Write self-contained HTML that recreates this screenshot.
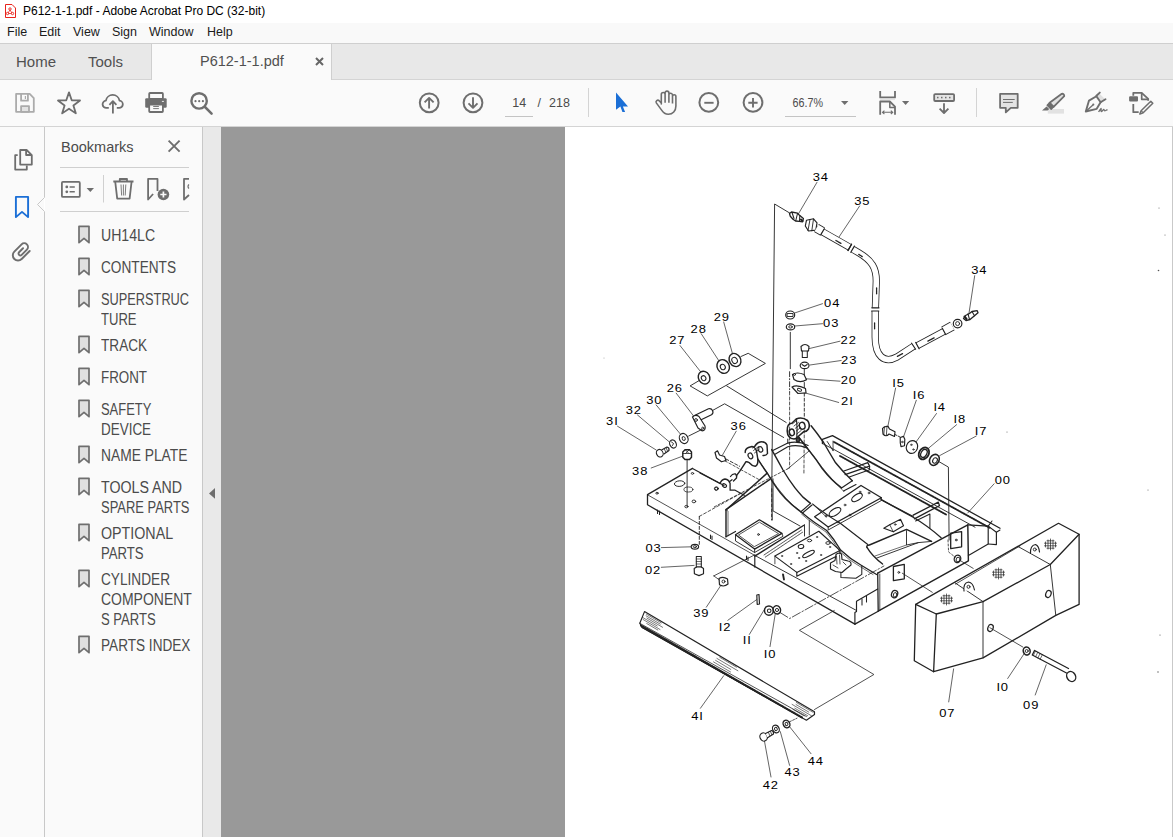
<!DOCTYPE html>
<html><head><meta charset="utf-8">
<style>
*{margin:0;padding:0;box-sizing:border-box}
html,body{width:1173px;height:837px;overflow:hidden;background:#fff;font-family:"Liberation Sans",sans-serif;position:relative}
.abs{position:absolute}
#title{left:0;top:0;width:1173px;height:23px;background:#fff}
#title .t{left:23px;top:4px;font-size:12px;color:#000;white-space:nowrap}
#menu{left:0;top:23px;width:1173px;height:21px;background:#f9f9f9;border-bottom:1px solid #cfcfcf}
#menu span{position:absolute;top:2px;font-size:12.5px;color:#1b1b1b}
#tabs{left:0;top:44px;width:1173px;height:36px;background:#e8e8e8;border-bottom:1px solid #d4d4d4}
#tabs .lbl{position:absolute;top:9px;font-size:15px;color:#505050}
#acttab{left:151px;top:44px;width:181px;height:36px;background:#fafafa;border-left:1px solid #cfcfcf;border-right:1px solid #cfcfcf}
#toolbar{left:0;top:80px;width:1173px;height:47px;background:#fafafa;border-bottom:1px solid #d4d4d4}
#lstrip{left:0;top:127px;width:44px;height:710px;background:#fafafa}
#bpanel{left:45px;top:127px;width:158px;height:710px;background:#fafafa;border-right:1px solid #c8c8c8}
#cstrip{left:203px;top:127px;width:18px;height:710px;background:#e9e9e9}
#gray{left:221px;top:127px;width:344px;height:710px;background:#999}
#page{left:565px;top:127px;width:608px;height:710px;background:#fff}
.bm{position:absolute;left:56px;font-size:16px;line-height:20px;color:#4b4b4b;width:150px;transform:scaleX(0.85);transform-origin:0 0;white-space:nowrap}
.bmi{position:absolute;left:32px}
svg{position:absolute;overflow:visible}
</style></head><body>
<div id="title" class="abs">
  <svg style="left:4px;top:4px" width="12" height="14" viewBox="0 0 12 14"><path d="M1.5 0.5h6.5l3.5 3.5v9.5h-10z" fill="#fff" stroke="#e8231c" stroke-width="1"/><circle cx="6" cy="5" r="1.2" fill="none" stroke="#e8231c" stroke-width="0.9"/><circle cx="3.5" cy="9.5" r="1.2" fill="none" stroke="#e8231c" stroke-width="0.9"/><circle cx="8.5" cy="9.5" r="1.2" fill="none" stroke="#e8231c" stroke-width="0.9"/><path d="M6 6l-2 3M6 6l2 3M4.5 9.5h3" stroke="#e8231c" stroke-width="0.8"/></svg>
  <span class="abs t">P612-1-1.pdf - Adobe Acrobat Pro DC (32-bit)</span>
</div>
<div id="menu" class="abs">
  <span style="left:7px">File</span><span style="left:39px">Edit</span><span style="left:73px">View</span><span style="left:112px">Sign</span><span style="left:149px">Window</span><span style="left:207px">Help</span>
</div>
<div id="tabs" class="abs">
  <span class="lbl" style="left:16px">Home</span><span class="lbl" style="left:88px">Tools</span>
</div>
<div id="acttab" class="abs">
  <span class="abs" style="left:48px;top:9px;font-size:14.5px;color:#505050">P612-1-1.pdf</span>
  <svg style="left:163px;top:13px" width="9" height="9" viewBox="0 0 9 9"><path d="M1 1L8 8M8 1L1 8" stroke="#666" stroke-width="2"/></svg>
</div>
<div id="toolbar" class="abs"></div>
<svg style="left:0;top:0" width="1173" height="127" viewBox="0 0 1173 127">
 <g fill="none" stroke="#6e6e6e" stroke-width="1.8" stroke-linejoin="round">
  <!-- save -->
  <g stroke="#ababab">
   <path d="M16.1 93.9h13.6l4.1 4.3v13.6h-17.7z"/>
   <path d="M21.1 93.9v6.8h6.8v-6.8" />
   <rect x="21.1" y="106.1" width="7.9" height="5.7" fill="#e3e3e3"/>
   <path d="M25.4 96v3" stroke-width="1.2"/>
  </g>
  <!-- star -->
  <polygon points="69.00,92.40 71.73,100.25 80.03,100.42 73.41,105.43 75.82,113.38 69.00,108.64 62.18,113.38 64.59,105.43 57.97,100.42 66.27,100.25" stroke-width="1.8"/>
  <!-- cloud -->
  <path d="M108.8 107.9h-2.3a3.6 3.6 0 0 1 -0.6 -7.2a6.9 6.9 0 0 1 13.6 0a3.6 3.6 0 0 1 -0.6 7.2h-2.1" stroke-width="1.8"/>
  <path d="M112.9 113.5v-12.4M109.4 104.8l3.5-3.7l3.5 3.7" stroke-width="1.8"/>
  <!-- printer -->
  <rect x="149.2" y="93" width="13.7" height="6" rx="0.8"/>
  <rect x="145.2" y="98.2" width="21.5" height="9.5" rx="1.2" fill="#6e6e6e" stroke="none"/>
  <rect x="149.2" y="104.6" width="13.7" height="7.4" rx="0.8" fill="#fafafa"/>
  <path d="M153.2 106.5h5.7M153.2 108.6h5.7" stroke-width="0.9"/>
  <rect x="161.9" y="100.9" width="2" height="1.1" fill="#ddd" stroke="none"/>
  <!-- search -->
  <circle cx="199.1" cy="100.9" r="7.7" stroke-width="2.4"/>
  <path d="M205 107l6.6 6.6" stroke-width="2.5" stroke-linecap="round"/>
  <g fill="#6e6e6e" stroke="none"><circle cx="195.5" cy="101.2" r="1.1"/><circle cx="199.2" cy="101.2" r="1.1"/><circle cx="202.9" cy="101.2" r="1.1"/></g>
  <!-- up / down -->
  <circle cx="429.2" cy="102.8" r="9.4" stroke-width="2"/>
  <path d="M429.1 108.6v-10.6M424.6 102.4l4.5-4.5l4.5 4.5" stroke-width="1.9"/>
  <circle cx="473" cy="102.8" r="9.4" stroke-width="2"/>
  <path d="M473 97.2v10.6M468.5 103.3l4.5 4.5l4.5-4.5" stroke-width="1.9"/>
  <!-- page box underline -->
  <path d="M505 116.5h28" stroke="#c4c4c4" stroke-width="1"/>
  <path d="M588.5 88v29" stroke="#d4d4d4" stroke-width="1"/>
  <!-- arrow cursor -->
  <path d="M616 92.5v17.3l4.4-3.4l2 5.5h2.7l-2.2-5.4h5.1z" fill="#1b6fd6" stroke="none"/>
  <!-- hand -->
  <path d="M661.3 104v-9.6a1.9 1.9 0 0 1 3.8 0v-1.4a1.9 1.9 0 0 1 3.8 0v1.4a1.9 1.9 0 0 1 3.6 0.4v1.6a1.7 1.7 0 0 1 3.4 0v9.5c0 5-3.2 8.3-7.6 8.3c-3.2 0-5-1.4-6.5-3.8l-5.5-7.5a1.8 1.8 0 0 1 2.8-2.2l2.2 2.2z M665.1 93v9.8M668.9 93v9.8M672.5 95.4v8" stroke-width="1.6"/>
  <!-- zoom out / in -->
  <circle cx="708.8" cy="102.4" r="9.4" stroke-width="2"/>
  <path d="M704.3 102.8h9.3" stroke-width="1.9"/>
  <circle cx="753" cy="102.4" r="9.4" stroke-width="2"/>
  <path d="M748.3 102.8h9.3M753 98v9.4" stroke-width="1.9"/>
  <!-- zoom underline + triangles -->
  <path d="M785 116.5h71" stroke="#c4c4c4" stroke-width="1"/>
  <path d="M841 101h7.4l-3.7 4z" fill="#6e6e6e" stroke="none"/>
  <path d="M902 101h7.2l-3.6 3.9z" fill="#6e6e6e" stroke="none"/>
  <!-- fit page -->
  <path d="M880.2 91v6.4h14.8v-6.4" stroke-width="1.8"/>
  <path d="M880.2 99.6h14.8" stroke="#e0e0e0" stroke-width="1"/>
  <path d="M880.2 114.8v-13.3h9.6l5.2 5.1v8.2" stroke-width="1.8"/>
  <path d="M889.8 101.5v6h5.2" stroke-width="1.5"/>
  <path d="M882.4 112.3h10.4M884.4 110.6l-2 1.7l2 1.7M890.8 110.6l2 1.7l-2 1.7" stroke-width="1.1"/>
  <!-- scroll -->
  <rect x="934.2" y="94.1" width="19.9" height="6.9" rx="1" fill="#e4e4e4"/>
  <g fill="#6e6e6e" stroke="none"><rect x="937" y="96.8" width="1.5" height="1.5"/><rect x="941" y="96.8" width="1.5" height="1.5"/><rect x="945" y="96.8" width="1.5" height="1.5"/><rect x="949" y="96.8" width="1.5" height="1.5"/></g>
  <path d="M944 103.3v9.6M939.6 108.6l4.4 4.4l4.4-4.4" stroke-width="1.8"/>
  <path d="M976.5 88v29" stroke="#d4d4d4" stroke-width="1"/>
  <!-- comment -->
  <path d="M1000.1 93.8h17.6v14h-6.9l-5 4.6v-4.6h-5.7z" fill="#e4e4e4" stroke-width="1.8"/>
  <path d="M1003 99.5h11.7M1003 102.4h9.8" stroke-width="1"/>
  <!-- highlighter -->
  <rect x="1047.8" y="109" width="16.2" height="4.6" fill="#e2e2e2" stroke="none"/>
  <path d="M1061.8 93.8a2 2 0 0 1 2.4 2.4l-10.6 10.6l-4-4z" fill="#e2e2e2" stroke-width="1.8"/>
  <path d="M1049.6 102.8l4 4l-2.4 2.4l-4-4z" fill="#6e6e6e" stroke-width="1.4"/>
  <path d="M1046.6 106.4l2.6 2.6l-1.6 1.6h-5.6z" fill="#6e6e6e" stroke="none"/>
  <!-- pen -->
  <path d="M1098.5 92.8l6.9 6.6l-4.6 3l-5-4.8z" fill="#e0e0e0" stroke="none"/>
  <path d="M1096.4 95.8l3.4-3.2M1100.6 102.2l4.9-3" stroke-width="1.9" stroke-linecap="round"/>
  <path d="M1096.4 96.2l-7.4 4.4l-3.2 10.9l10.9-2.7l3.9-6.6z" stroke-width="1.9"/>
  <path d="M1086.3 111l6.6-6" stroke-width="1.3"/>
  <circle cx="1093.3" cy="104.6" r="1.1" fill="#6e6e6e" stroke="none"/>
  <path d="M1098.6 112c0.8-1.4 1.8-2.8 2.5-3.5c0.2 1.3-0.4 3 0.4 3c0.9 0 1.6-2.2 2.3-2.2c0.5 0 0.2 1.6 0.9 1.6c0.6 0 1.5-0.7 2.8-1.3" stroke-width="1.3"/>
  <!-- edit pdf -->
  <path d="M1133.3 95.8v-3h8.4l6.5 6.1v1.8" stroke-width="1.8"/>
  <path d="M1141.7 92.8v6.5h6.5" stroke-width="1.7"/>
  <path d="M1133.3 104v8.2h5.4" stroke-width="1.8"/>
  <rect x="1129.1" y="96.2" width="8.9" height="5.4" rx="1" fill="#6e6e6e" stroke="none"/>
  <path d="M1150.8 101.2l2 2l-9.6 9.6l-3.4 1.3l1.3-3.4z" stroke-width="1.5"/>
  <path d="M1141.1 110.7l2 2" stroke-width="1.1"/>
 </g>
 <g font-family="Liberation Sans, sans-serif" fill="#4b4b4b" font-size="12.5px">
  <text x="512.2" y="107.4">14</text>
  <text x="537.5" y="107.4">/</text>
  <text x="549" y="107.4">218</text>
  <text x="792.6" y="107.4" textLength="30.5" lengthAdjust="spacingAndGlyphs">66.7%</text>
 </g>
</svg>
<div id="lstrip" class="abs"></div>
<div id="bpanel" class="abs"></div>
<div id="cstrip" class="abs"></div>
<svg style="left:0;top:0" width="221" height="837" viewBox="0 0 221 837">
 <g fill="none" stroke="#6e6e6e" stroke-width="1.8" stroke-linejoin="round">
  <!-- pages -->
  <path d="M20.2 150h6.4l5.2 5.2v9.4h-11.6z"/>
  <path d="M26.1 150v5h5.7"/>
  <path d="M17.7 155.1h-2.5v14.5h11.6v-4"/>
  <!-- blue bookmark -->
  <path d="M15.9 196.9h12.2v20.2l-6.1-5.2l-6.1 5.2z" stroke="#1b6fd6" stroke-width="1.9"/>
  <!-- notch on divider -->
  <path d="M44.5 127v70.5l-7 7l7 7V837" stroke="#c8c8c8" stroke-width="1" stroke-linejoin="miter"/>
  <!-- paperclip -->
  <path transform="translate(18 255.3) rotate(45)" d="M-1.4 -8.5V-2.9A1.85 1.85 0 0 0 2.3 -2.9V-10.25A3.75 3.75 0 0 0 -5.2 -10.25V0A5.2 5.2 0 0 0 5.2 0V-11.3" stroke-width="1.95" stroke-linecap="round"/>
  <!-- close X -->
  <path d="M168.6 140.6l11 11M179.6 140.6l-11 11" stroke-width="1.9"/>
  <path d="M60 167.5h129" stroke="#cfcfcf" stroke-width="1"/>
  <path d="M60 211.5h129" stroke="#cfcfcf" stroke-width="1"/>
  <!-- options -->
  <rect x="61.9" y="181.9" width="17.9" height="15" rx="1"/>
  <g fill="#6e6e6e" stroke="none"><circle cx="66.8" cy="186.9" r="1.4"/><circle cx="66.8" cy="191.8" r="1.4"/></g>
  <path d="M69.6 186.9h5.2M69.6 191.8h5.2" stroke-width="1.5"/>
  <path d="M86.6 188h7.4l-3.7 4z" fill="#6e6e6e" stroke="none"/>
  <path d="M103.5 175v27.5" stroke="#d0d0d0" stroke-width="1"/>
  <!-- trash -->
  <path d="M113.3 181.5h20.2M119.8 181.5v-2.5h7.2v2.5" stroke-width="1.8"/>
  <path d="M115.2 181.5l2 17.2h12.4l2-17.2" stroke-width="1.8"/>
  <path d="M121 184.5l0.6 11M123.4 184.5v11M125.8 184.5l-0.6 11" stroke-width="0.9"/>
  <!-- bookmark add -->
  <path d="M157.5 191v-12.1h-9.4v20.6l5-5.5" stroke-width="1.8"/>
  <circle cx="163.4" cy="194.5" r="5.8" fill="#6e6e6e" stroke="none"/>
  <path d="M160.3 194.5h6.2M163.4 191.4v6.2" stroke="#fafafa" stroke-width="1.7"/>
  <!-- partial icon clipped -->
  <path d="M189 178.9h-5v20.6l5-4.5" stroke-width="1.8"/>
  <path d="M189 184.5a2.5 2.5 0 0 0 0 4" stroke-width="1.2"/>
  <!-- collapse triangle -->
  <path d="M215 488v10.8l-6-5.4z" fill="#6e6e6e" stroke="none"/>
 </g>
 <g fill="#e0e0e0" stroke="#6e6e6e" stroke-width="1.7" stroke-linejoin="round">
  <path d="M79 226.3h10v16.4l-5-4.3l-5 4.3z"/>
  <path d="M79 258.3h10v16.4l-5-4.3l-5 4.3z"/>
  <path d="M79 290.3h10v16.4l-5-4.3l-5 4.3z"/>
  <path d="M79 336.3h10v16.4l-5-4.3l-5 4.3z"/>
  <path d="M79 368.3h10v16.4l-5-4.3l-5 4.3z"/>
  <path d="M79 400.3h10v16.4l-5-4.3l-5 4.3z"/>
  <path d="M79 446.3h10v16.4l-5-4.3l-5 4.3z"/>
  <path d="M79 478.3h10v16.4l-5-4.3l-5 4.3z"/>
  <path d="M79 524.3h10v16.4l-5-4.3l-5 4.3z"/>
  <path d="M79 570.3h10v16.4l-5-4.3l-5 4.3z"/>
  <path d="M79 636.3h10v16.4l-5-4.3l-5 4.3z"/>
 </g>
</svg>
<div class="abs" style="left:61px;top:139px;font-size:14.5px;color:#4b4b4b">Bookmarks</div>
<div class="bm" style="left:101px;top:226px;transform:scaleX(0.881)">UH14LC</div>
<div class="bm" style="left:101px;top:258px;transform:scaleX(0.853)">CONTENTS</div>
<div class="bm" style="left:101px;top:290px;transform:scaleX(0.799)">SUPERSTRUC</div>
<div class="bm" style="left:101px;top:310px;transform:scaleX(0.816)">TURE</div>
<div class="bm" style="left:101px;top:336px;transform:scaleX(0.850)">TRACK</div>
<div class="bm" style="left:101px;top:368px;transform:scaleX(0.835)">FRONT</div>
<div class="bm" style="left:101px;top:400px;transform:scaleX(0.808)">SAFETY</div>
<div class="bm" style="left:101px;top:420px;transform:scaleX(0.841)">DEVICE</div>
<div class="bm" style="left:101px;top:446px;transform:scaleX(0.863)">NAME PLATE</div>
<div class="bm" style="left:101px;top:478px;transform:scaleX(0.888)">TOOLS AND</div>
<div class="bm" style="left:101px;top:498px;transform:scaleX(0.809)">SPARE PARTS</div>
<div class="bm" style="left:101px;top:524px;transform:scaleX(0.891)">OPTIONAL</div>
<div class="bm" style="left:101px;top:544px;transform:scaleX(0.821)">PARTS</div>
<div class="bm" style="left:101px;top:570px;transform:scaleX(0.853)">CYLINDER</div>
<div class="bm" style="left:101px;top:590px;transform:scaleX(0.874)">COMPONENT</div>
<div class="bm" style="left:101px;top:610px;transform:scaleX(0.816)">S PARTS</div>
<div class="bm" style="left:101px;top:636px;transform:scaleX(0.850)">PARTS INDEX</div>
<div id="gray" class="abs"></div>
<div id="page" class="abs"></div>
<div class="abs" style="left:1172px;top:127px;width:1px;height:710px;background:#c9c9c9"></div>
<!--DRAWING-->
<svg style="left:0;top:0" width="1173" height="837" viewBox="0 0 1173 837">
<g fill="none" stroke="#222" stroke-width="0.8" stroke-linecap="round" stroke-linejoin="round">
<path d="M817.0 182.3L798.4 213.9" stroke-width="0.7"/>
<path d="M859.6 206.0L838.6 237.6" stroke-width="0.7"/>
<path d="M974.7 275.7L968.7 315.1" stroke-width="0.7"/>
<path d="M822.5 303.7L792.5 313.7" stroke-width="0.7"/>
<path d="M822.5 323.7L792.5 326.2" stroke-width="0.7"/>
<path d="M840.0 341.2L808.7 348.7" stroke-width="0.7"/>
<path d="M841.2 360.5L810.0 365.0" stroke-width="0.7"/>
<path d="M840.0 381.2L805.0 378.7" stroke-width="0.7"/>
<path d="M838.7 402.5L803.7 392.5" stroke-width="0.7"/>
<path d="M723.7 322.0L732.5 353.7" stroke-width="0.7"/>
<path d="M701.2 333.7L720.0 362.5" stroke-width="0.7"/>
<path d="M680.0 345.5L701.2 372.5" stroke-width="0.7"/>
<path d="M676.2 393.2L693.7 416.2" stroke-width="0.7"/>
<path d="M656.2 405.0L681.2 435.0" stroke-width="0.7"/>
<path d="M637.5 415.0L670.0 442.5" stroke-width="0.7"/>
<path d="M617.5 426.2L656.2 450.0" stroke-width="0.7"/>
<path d="M736.2 431.2L722.5 455.0" stroke-width="0.7"/>
<path d="M651.2 468.0L682.5 456.2" stroke-width="0.7"/>
<path d="M895.6 388.1L887.8 426.6" stroke-width="0.7"/>
<path d="M916.3 400.3L903.5 436.9" stroke-width="0.7"/>
<path d="M936.5 413.5L916.3 441.6" stroke-width="0.7"/>
<path d="M956.6 424.7L927.5 449.1" stroke-width="0.7"/>
<path d="M976.3 436.0L939.7 455.6" stroke-width="0.7"/>
<path d="M994.1 483.8L967.8 512.9" stroke-width="0.7"/>
<path d="M661.3 547.6L692.0 546.8" stroke-width="0.7"/>
<path d="M661.3 567.3L694.1 565.4" stroke-width="0.7"/>
<path d="M706.3 607.2L721.3 584.7" stroke-width="0.7"/>
<path d="M727.8 620.3L757.8 598.8" stroke-width="0.7"/>
<path d="M749.4 634.4L766.3 606.3" stroke-width="0.7"/>
<path d="M770.0 646.6L775.7 611.0" stroke-width="0.7"/>
<path d="M700.4 708.3L723.7 675.7" stroke-width="0.7"/>
<path d="M811.0 753.7L788.9 725.8" stroke-width="0.7"/>
<path d="M789.6 765.4L780.3 731.6" stroke-width="0.7"/>
<path d="M771.0 777.0L764.0 738.6" stroke-width="0.7"/>
<path d="M948.7 701.9L953.6 668.9" stroke-width="0.7"/>
<path d="M1007.7 678.5L1025.0 652.4" stroke-width="0.7"/>
<path d="M1035.2 695.0L1046.2 664.8" stroke-width="0.7"/>
<path d="M789.5 212.9 L774.6 204.0 L771.8 489.0" stroke-width="0.91"/>
<path d="M771.8 489.0 L771.6 520.0" stroke-width="0.91" stroke-dasharray="3 2"/>
<path d="M789.5 213.5 L791.5 212 L797.5 213.2 L799.8 215.6 L803.4 218.6 L802.6 221.8 L799.5 221.4 L795.5 221 L793 219.3 L790.3 216.2 Z" stroke-width="1.30" fill="#fff"/>
<path d="M792 212.5 L794 218.5 M797.5 213.5 L795.8 220.5 M799.8 215.6 L799.5 221.4" stroke-width="1.04"/>
<path d="M801 219.5 l1.5 1.5" stroke-width="2.08"/>
<path d="M806.5 220.2 L813.5 218.8 L817 222.8 L815.8 230.2 L808.5 231 L805.3 226 Z" stroke-width="1.17" fill="#fff"/>
<path d="M810 219.5 L808 230.5 M813.5 219 L811.8 230.8" stroke-width="0.91"/>
<path d="M816.5 228 L822.5 231.5" stroke-width="9.4" stroke-linecap="butt"/>
<path d="M816.5 228 L822.5 231.5" stroke="#fff" stroke-width="7.8" stroke-linecap="butt"/>
<path d="M822.5 231.8 L849.8 247.3" stroke-width="7.2" stroke-linecap="butt"/>
<path d="M822.5 231.8 L849.8 247.3" stroke="#fff" stroke-width="5.6" stroke-linecap="butt"/>
<path d="M848 250.6 L851.5 244.2" stroke-width="1.17"/>
<path d="M852.6 249.2 L858.5 252.6 C872 260.5 876.3 268 876.3 281 L875.4 307.8" stroke-width="7.2" stroke-linecap="butt"/>
<path d="M852.6 249.2 L858.5 252.6 C872 260.5 876.3 268 876.3 281 L875.4 307.8" stroke="#fff" stroke-width="5.6" stroke-linecap="butt"/>
<path d="M875.2 311 L875.2 337 C875.2 356 884 364 897 357 L913.6 346.2" stroke-width="7.2" stroke-linecap="butt"/>
<path d="M875.2 311 L875.2 337 C875.2 356 884 364 897 357 L913.6 346.2" stroke="#fff" stroke-width="5.6" stroke-linecap="butt"/>
<path d="M917.4 345.6 L944 331.4" stroke-width="7.2" stroke-linecap="butt"/>
<path d="M917.4 345.6 L944 331.4" stroke="#fff" stroke-width="5.6" stroke-linecap="butt"/>
<path d="M943.5 330.8 L952.3 326" stroke-width="9.4" stroke-linecap="butt"/>
<path d="M943.5 330.8 L952.3 326" stroke="#fff" stroke-width="7.8" stroke-linecap="butt"/>
<circle cx="957.6" cy="323.6" r="4.3" stroke-width="1.17" fill="#fff"/>
<circle cx="957.6" cy="323.6" r="2.0" stroke-width="0.91"/>
<path d="M963.5 318.5 L965.5 315.5 L969.5 313.5 L972 311.5 L977.2 310.6 L978 312.8 L974.5 315.8 L970 319.5 L966 320.6 Z" stroke-width="1.30" fill="#fff"/>
<path d="M968 313.8 L969.5 319.5 M972 311.5 L974.5 315.8" stroke-width="1.04"/>
<path d="M964.5 316.5 l2 2.5" stroke-width="2.08"/>
<ellipse cx="790.2" cy="315.0" rx="4.5" ry="4.0" transform="rotate(0 790.2 315.0)" stroke-width="1.17" fill="#fff"/>
<path d="M787.5 313.5h5.5v3h-5.5z" stroke-width="0.91"/>
<ellipse cx="790.5" cy="326.9" rx="4.2" ry="3.0" transform="rotate(0 790.5 326.9)" stroke-width="1.17" fill="#fff"/>
<ellipse cx="790.5" cy="326.9" rx="1.8" ry="1.2" transform="rotate(0 790.5 326.9)" stroke-width="0.91"/>
<path d="M790.3 332.3 L790.3 368.7" stroke-width="0.91"/>
<path d="M789.6 371.7 L789.6 392.0" stroke-width="0.91" stroke-dasharray="5 2 1 2"/>
<path d="M801 346.5 Q805 342.5 809 346.5 L808.5 351 L801.5 351 Z" stroke-width="1.17" fill="#fff"/>
<path d="M802.3 351 v6.5 h5 v-6.5" stroke-width="1.04"/>
<ellipse cx="804.6" cy="365.4" rx="4.4" ry="3.2" transform="rotate(0 804.6 365.4)" stroke-width="1.17" fill="#fff"/>
<path d="M802 364.5 l2.6 1.8 l2.6 -1.8" stroke-width="1.04"/>
<path d="M804.3 368.7 L804.3 376.5" stroke-width="0.91"/>
<path d="M792.5 374.5 Q797 371.5 804 374.5 L806.5 379.8 Q800 383.5 794 379.5 Z" stroke-width="1.17" fill="#fff"/>
<circle cx="794.5" cy="374.5" r="1.0" stroke-width="0.91"/>
<path d="M804.3 382.5 L804.3 388.4" stroke-width="0.91"/>
<path d="M792 387 Q797 384 805.5 388.5 L806 392.8 L798 393.5 Z" stroke-width="1.17" fill="#fff"/>
<ellipse cx="799.5" cy="389.8" rx="2.2" ry="1.3" transform="rotate(20 799.5 389.8)" stroke-width="0.91"/>
<path d="M804.3 393.2 L804.3 430.0" stroke-width="0.91" stroke-dasharray="3 2"/>
<path d="M703.5 378.0 L690.1 385.9 L707.3 395.9 L765.4 363.4 L748.2 353.3 L741.0 356.5" stroke-width="0.91"/>
<ellipse cx="704.1" cy="377.6" rx="5.6" ry="6.6" transform="rotate(-30 704.1 377.6)" stroke-width="1.43" fill="#fff"/>
<ellipse cx="703.6" cy="378.2" rx="2.2" ry="2.6" transform="rotate(-30 703.6 378.2)" stroke-width="1.04"/>
<ellipse cx="723.2" cy="366.5" rx="6.0" ry="7.1" transform="rotate(-30 723.2 366.5)" stroke-width="1.43" fill="#fff"/>
<ellipse cx="722.8" cy="367.0" rx="2.4" ry="2.8" transform="rotate(-30 722.8 367.0)" stroke-width="1.04"/>
<ellipse cx="735.0" cy="360.0" rx="5.6" ry="6.9" transform="rotate(-30 735.0 360.0)" stroke-width="1.43" fill="#fff"/>
<ellipse cx="734.6" cy="360.4" rx="2.6" ry="3.2" transform="rotate(-30 734.6 360.4)" stroke-width="1.04"/>
<path d="M726.7 385.9 L786.2 422.5" stroke-width="0.91"/>
<path d="M711.6 411.0 L724.6 403.8 L783.7 437.5" stroke-width="0.91"/>
<path d="M694.5 415.5 L708.5 408.8 A3.4 3.4 0 0 1 711.5 414.8 L697 421.8" stroke-width="1.17" fill="#fff"/>
<path d="M692.5 417 Q695.5 414 699 416.5 L705 426 Q706 430.5 702 430.8 L698 428 Z" stroke-width="1.17" fill="#fff"/>
<circle cx="696.0" cy="420.0" r="1.4" stroke-width="0.91"/>
<circle cx="702.8" cy="428.2" r="1.1" stroke-width="0.91"/>
<path d="M688.7 436.0 L701.6 429.6" stroke-width="0.91"/>
<ellipse cx="683.7" cy="438.5" rx="4.2" ry="5.2" transform="rotate(-25 683.7 438.5)" stroke-width="1.17" fill="#fff"/>
<ellipse cx="683.7" cy="438.5" rx="1.5" ry="1.9" transform="rotate(-25 683.7 438.5)" stroke-width="0.91"/>
<ellipse cx="673.0" cy="444.0" rx="3.2" ry="4.2" transform="rotate(-25 673.0 444.0)" stroke-width="1.17" fill="#fff"/>
<path d="M671.5 442 l2 1.5 l-1 2" stroke-width="0.91"/>
<ellipse cx="659.8" cy="453.2" rx="3.3" ry="3.9" transform="rotate(-25 659.8 453.2)" stroke-width="1.17" fill="#fff"/>
<path d="M662 449.8 L667 447 Q669.5 447.5 669 450.5 L664.3 453.8" stroke-width="1.17" fill="#fff"/>
<path d="M664.5 449.3 l1.3 3 M666.3 448.3 l1.3 3" stroke-width="0.78"/>
<path d="M682.8 452 L685 449.8 L689.5 449.8 L691.5 452 L691.5 457.2 L689.5 459.5 L685 459.5 L682.8 457.2 Z" stroke-width="1.43" fill="#fff"/>
<path d="M682.8 453.5 L691.5 453.5 M685.5 450 l3.5 3.5 M689 450 l-3.5 3.5" stroke-width="0.78"/>
<path d="M687.1 460.0 L687.1 506.6" stroke-width="0.91"/>
<path d="M715 452.5 L717.5 450.8 L719.5 455 L724.5 456.5 L726 460.5 L721.5 461.8 L716.5 458 Z" stroke-width="1.17" fill="#fff"/>
<path d="M726.0 459.0 L740.0 466.5" stroke-width="0.91" stroke-dasharray="3 2"/>
<path d="M882.5 428.5 Q884 425.8 888 426.4 L889.5 429 L895 431.8 L894.5 436.5 L889 434 Q886 437.5 883 434 Z" stroke-width="1.17" fill="#fff"/>
<path d="M884.5 427 L883.8 434.5 M887 426.6 L886.4 435" stroke-width="0.78"/>
<path d="M895.0 434.5 L900.0 437.0" stroke-width="0.91" stroke-dasharray="2 1.5"/>
<path d="M900.2 437.5 L903.5 436.4 L904.8 439.3 L904.5 445.8 L901 446.6 L900.3 443 Z" stroke-width="1.17" fill="#fff"/>
<circle cx="902.3" cy="442.0" r="0.8" stroke-width="0.78"/>
<ellipse cx="912.0" cy="447.0" rx="5.6" ry="6.5" transform="rotate(20 912.0 447.0)" stroke-width="1.17" fill="#fff"/>
<circle cx="911.3" cy="444.8" r="0.7" stroke-width="0.78"/>
<circle cx="913.4" cy="449.5" r="0.7" stroke-width="0.78"/>
<ellipse cx="923.9" cy="453.4" rx="4.8" ry="6.3" transform="rotate(30 923.9 453.4)" stroke-width="1.82" fill="#fff"/>
<ellipse cx="923.9" cy="453.4" rx="2.8" ry="4.3" transform="rotate(30 923.9 453.4)" stroke-width="1.30"/>
<ellipse cx="934.4" cy="459.9" rx="4.6" ry="5.8" transform="rotate(30 934.4 459.9)" stroke-width="1.56" fill="#fff"/>
<ellipse cx="935.0" cy="460.5" rx="2.2" ry="2.8" transform="rotate(30 935.0 460.5)" stroke-width="1.04"/>
<path d="M938.9 461.6 L948.4 467.1 L949.1 540.0" stroke-width="0.91"/>
<path d="M644.5 611.6 L814.5 711.8 L814.5 714.5 L806.4 720.2 L642.1 627.6 L639.8 623.3 L644.5 611.6" stroke-width="1.17"/>
<path d="M639.8 623.3 L806.4 716.5" stroke-width="0.78"/>
<path d="M642.1 627.6 L797.0 714.8" stroke-width="0.78"/>
<path d="M646.2 614.0L661.3 622.9" stroke-width="0.6"/>
<path d="M646.1 615.8L660.2 624.1" stroke-width="0.6"/>
<path d="M646.9 618.1L662.6 627.3" stroke-width="0.6"/>
<path d="M642.4 617.3L657.2 626.0" stroke-width="0.6"/>
<path d="M643.1 619.5L660.0 629.5" stroke-width="0.6"/>
<path d="M646.7 623.5L657.8 630.0" stroke-width="0.6"/>
<path d="M719.7 657.3L736.4 667.2" stroke-width="0.6"/>
<path d="M716.9 658.4L737.9 670.8" stroke-width="0.6"/>
<path d="M715.6 660.4L730.8 669.4" stroke-width="0.6"/>
<path d="M713.5 661.9L730.6 672.0" stroke-width="0.6"/>
<path d="M796.4 702.5L813.2 712.4" stroke-width="0.6"/>
<path d="M796.0 704.5L808.8 712.1" stroke-width="0.6"/>
<path d="M792.1 704.4L811.5 715.8" stroke-width="0.6"/>
<path d="M794.8 708.2L807.7 715.8" stroke-width="0.6"/>
<path d="M792.9 709.3L804.1 715.9" stroke-width="0.6"/>
<path d="M641 625.5 L802 717.5" stroke-width="2.08" stroke-dasharray="0.8 0.9"/>
<path d="M814.5 709.5 L873.9 674.5 L799.4 630.3 L834.3 610.5" stroke-width="0.78"/>
<ellipse cx="763.6" cy="737.0" rx="3.6" ry="4.2" transform="rotate(-25 763.6 737.0)" stroke-width="1.17" fill="#fff"/>
<path d="M765.5 733.5 L771.5 730.5 Q774 731 773.5 734 L767.5 737.8" stroke-width="1.17" fill="#fff"/>
<path d="M768.5 732.5 l1.2 3 M770.5 731.5 l1.2 3" stroke-width="0.78"/>
<ellipse cx="775.9" cy="729.0" rx="3.2" ry="4.0" transform="rotate(-30 775.9 729.0)" stroke-width="1.17" fill="#fff"/>
<ellipse cx="775.9" cy="729.0" rx="1.3" ry="1.7" transform="rotate(-30 775.9 729.0)" stroke-width="0.91"/>
<ellipse cx="786.5" cy="724.0" rx="3.2" ry="4.0" transform="rotate(-30 786.5 724.0)" stroke-width="1.43" fill="#fff"/>
<ellipse cx="786.5" cy="724.0" rx="1.3" ry="1.7" transform="rotate(-30 786.5 724.0)" stroke-width="0.91"/>
<path d="M789.5 721.8 L797.0 718.2" stroke-width="0.78" stroke-dasharray="2 1.5"/>
<ellipse cx="694.9" cy="546.7" rx="3.7" ry="2.4" transform="rotate(0 694.9 546.7)" stroke-width="1.17" fill="#fff"/>
<ellipse cx="694.9" cy="546.7" rx="1.6" ry="1.0" transform="rotate(0 694.9 546.7)" stroke-width="0.91"/>
<path d="M699.3 516.4 L699.3 544.3" stroke-width="0.91" stroke-dasharray="3 2"/>
<path d="M694.2 568.5 L697 566.8 L701 566.8 L703.5 568.5 L703.5 573.8 L699 575.6 L694.4 573.8 Z" stroke-width="1.17" fill="#fff"/>
<path d="M696.3 567 v-10.6 h5 v10.6" stroke-width="1.04"/>
<path d="M696.3 559 h5 M696.3 561.5 h5 M696.3 564 h5" stroke-width="0.65"/>
<path d="M719 578.5 Q723 576 727.5 579 L728 584 Q724 587.5 719.5 584.8 Z" stroke-width="1.17" fill="#fff"/>
<circle cx="723.5" cy="581.5" r="1.5" stroke-width="0.91"/>
<path d="M713.8 575.9 L755.0 554.7" stroke-width="0.78"/>
<path d="M719.5 580.0 L713.8 575.9" stroke-width="0.78"/>
<path d="M756.8 595 L759 594.5 L759.5 604 L757.2 604.5 Z" stroke-width="1.17" fill="#fff"/>
<ellipse cx="768.9" cy="610.6" rx="4.4" ry="4.6" transform="rotate(0 768.9 610.6)" stroke-width="1.43" fill="#fff"/>
<circle cx="769.2" cy="610.8" r="1.8" stroke-width="1.04"/>
<ellipse cx="776.9" cy="609.8" rx="3.6" ry="4.2" transform="rotate(-20 776.9 609.8)" stroke-width="1.43" fill="#fff"/>
<circle cx="777.0" cy="610.0" r="1.6" stroke-width="0.91"/>
<path d="M780.0 612.5 L789.7 618.5 L883.9 566.0" stroke-width="0.78" stroke-dasharray="9 2 1.5 2"/>
<path d="M915.7 604.4 L1058.5 523.3 L1079.1 534.3 L1050.3 564.5 L983.0 601.6 L936.3 614.0 L915.7 604.4" stroke-width="1.30"/>
<path d="M936.3 614.0 L933.6 671.7 L983.0 657.9 L1055.8 615.4 L1079.1 604.4 L1079.1 534.3" stroke-width="1.30"/>
<path d="M915.7 604.4 L914.3 660.7 L933.6 671.7" stroke-width="1.30"/>
<path d="M983.0 601.6 L983.0 657.9" stroke-width="0.91"/>
<path d="M1050.3 564.5 L1055.8 615.4" stroke-width="0.91"/>
<path d="M954.5 582.5 L983.0 601.6" stroke-width="0.91"/>
<path d="M1018.0 546.5 L1050.3 564.5" stroke-width="0.91"/>
<path d="M964 591 Q963 583 968.5 582 Q973 582.5 974.5 590" stroke-width="1.17" fill="#fff"/>
<circle cx="968.5" cy="586.8" r="1.5" stroke-width="0.91"/>
<path d="M1030.5 553.5 Q1030 545.5 1035.5 544.5 Q1039 546 1039.5 552" stroke-width="1.17" fill="#fff"/>
<circle cx="1034.8" cy="549.5" r="1.5" stroke-width="0.91"/>
<path d="M941.5 597.0 v5.0" stroke-width="0.7"/>
<path d="M944.0 595.0 v9.0" stroke-width="0.7"/>
<path d="M946.5 594.0 v11.0" stroke-width="0.7"/>
<path d="M949.0 595.0 v9.0" stroke-width="0.7"/>
<path d="M951.5 597.0 v5.0" stroke-width="0.7"/>
<path d="M943.0 595.8 h7.0" stroke-width="0.7"/>
<path d="M940.5 598.2 h12.0" stroke-width="0.7"/>
<path d="M940.5 600.8 h12.0" stroke-width="0.7"/>
<path d="M943.0 603.2 h7.0" stroke-width="0.7"/>
<path d="M993.5 571.0 v5.0" stroke-width="0.7"/>
<path d="M996.0 569.0 v9.0" stroke-width="0.7"/>
<path d="M998.5 568.0 v11.0" stroke-width="0.7"/>
<path d="M1001.0 569.0 v9.0" stroke-width="0.7"/>
<path d="M1003.5 571.0 v5.0" stroke-width="0.7"/>
<path d="M995.0 569.8 h7.0" stroke-width="0.7"/>
<path d="M992.5 572.2 h12.0" stroke-width="0.7"/>
<path d="M992.5 574.8 h12.0" stroke-width="0.7"/>
<path d="M995.0 577.2 h7.0" stroke-width="0.7"/>
<path d="M1045.5 542.0 v5.0" stroke-width="0.7"/>
<path d="M1048.0 540.0 v9.0" stroke-width="0.7"/>
<path d="M1050.5 539.0 v11.0" stroke-width="0.7"/>
<path d="M1053.0 540.0 v9.0" stroke-width="0.7"/>
<path d="M1055.5 542.0 v5.0" stroke-width="0.7"/>
<path d="M1047.0 540.8 h7.0" stroke-width="0.7"/>
<path d="M1044.5 543.2 h12.0" stroke-width="0.7"/>
<path d="M1044.5 545.8 h12.0" stroke-width="0.7"/>
<path d="M1047.0 548.2 h7.0" stroke-width="0.7"/>
<ellipse cx="1048.4" cy="594.0" rx="2.6" ry="3.6" transform="rotate(20 1048.4 594.0)" stroke-width="1.30"/>
<ellipse cx="990.5" cy="628.0" rx="2.6" ry="3.6" transform="rotate(20 990.5 628.0)" stroke-width="1.30"/>
<path d="M989.9 627.7 L1022.8 647.0" stroke-width="0.78"/>
<ellipse cx="1026.7" cy="651.0" rx="3.4" ry="4.0" transform="rotate(-20 1026.7 651.0)" stroke-width="1.56" fill="#fff"/>
<circle cx="1026.7" cy="651.0" r="1.5" stroke-width="0.91"/>
<path d="M1034.5 650.5 L1068.5 668.5 M1032.3 655 L1066.5 673 M1034.5 650.5 L1032.3 655" stroke-width="1.30"/>
<path d="M1035.5 651 l-2.2 4.5 M1037.8 652.2 l-2.2 4.5 M1040.1 653.4 l-2.2 4.5 M1042.4 654.6 l-2.2 4.5" stroke-width="0.65"/>
<ellipse cx="1071.2" cy="676.5" rx="4.3" ry="5.2" transform="rotate(-30 1071.2 676.5)" stroke-width="1.43" fill="#fff"/>
<path d="M692.5 468.4 L647.5 494.6 L647.5 504.8 L854.9 624.1" stroke-width="1.30"/>
<path d="M692.5 468.4 L724.0 485.5" stroke-width="1.17"/>
<path d="M648.2 495.2 L754.6 555.3" stroke-width="0.78"/>
<ellipse cx="692.5" cy="473.4" rx="1.2" ry="0.9" transform="rotate(0 692.5 473.4)" stroke-width="0.91"/>
<ellipse cx="657.0" cy="493.2" rx="1.2" ry="0.9" transform="rotate(0 657.0 493.2)" stroke-width="0.91"/>
<ellipse cx="716.4" cy="488.4" rx="2.0" ry="1.5" transform="rotate(0 716.4 488.4)" stroke-width="0.91"/>
<ellipse cx="693.9" cy="501.4" rx="1.8" ry="1.4" transform="rotate(0 693.9 501.4)" stroke-width="0.91"/>
<ellipse cx="686.4" cy="506.6" rx="1.6" ry="1.2" transform="rotate(0 686.4 506.6)" stroke-width="0.91"/>
<ellipse cx="679.6" cy="483.6" rx="5.2" ry="2.8" transform="rotate(-5 679.6 483.6)" stroke-width="0.91"/>
<ellipse cx="688.4" cy="489.5" rx="4.5" ry="2.5" transform="rotate(0 688.4 489.5)" stroke-width="0.78"/>
<path d="M657.5 510 v3.5 M659.5 511 v3.5" stroke-width="1.04"/>
<path d="M710.5 535 v3.5 M712 536 v3.5" stroke-width="1.04"/>
<path d="M746.5 556 v3.5 M748 557 v3.5" stroke-width="1.04"/>
<path d="M699.3 516.4 L743.7 491.8" stroke-width="0.78" stroke-dasharray="3 2"/>
<path d="M726.0 536.8 L726.0 509.6 L769.6 479.6" stroke-width="1.43"/>
<path d="M773.0 478.9 L773.0 510.9 L800.0 526.0" stroke-width="0.91"/>
<path d="M726.0 536.8 L735.5 531.4" stroke-width="1.17"/>
<path d="M726.0 509.6 L728.0 511.0 L728.0 535.8" stroke-width="0.65"/>
<path d="M735.5 534.8 L759.4 519.8 L781.9 533.4 L754.6 549.1Z" stroke-width="1.30"/>
<path d="M738.8 534.8 L759.4 522.2 L778.5 533.6 L754.6 546.5Z" stroke-width="0.78"/>
<circle cx="758.5" cy="534.5" r="0.9" stroke-width="0.91"/>
<path d="M754.6 549.1 L754.6 552.5 L735.5 541.0 L735.5 534.8" stroke-width="0.91"/>
<path d="M754.6 552.5 L783.0 536.3 L781.9 533.4" stroke-width="0.91"/>
<path d="M745.2 452.5 Q745 449 748.5 447.5 L752 446.5 Q755.5 447 756.5 451 L757.8 459 Q758.5 465 755.2 466.3 Q752 466 749 462.5 Q747.5 461.5 746 461.7 Q744 465 741 469.3 Q738.5 473 736.8 475.1" stroke-width="1.43" fill="#fff"/>
<path d="M736.8 475.1 Q734 479 729.3 481.8" stroke-width="1.30"/>
<path d="M720 483.5 Q721.5 479.5 725 479 Q729 479.5 730.1 483.5 L730.1 490.2 L735.1 490.2 L744.3 495.2" stroke-width="1.30"/>
<ellipse cx="724.4" cy="485.6" rx="2.2" ry="1.6" transform="rotate(30 724.4 485.6)" stroke-width="1.17"/>
<path d="M730.5 476.5 Q732.5 473.5 735.5 474 Q737 475.5 736.5 478 L733.5 481" stroke-width="1.30" fill="#fff"/>
<ellipse cx="750.4" cy="455.9" rx="2.2" ry="3.0" transform="rotate(-25 750.4 455.9)" stroke-width="1.17"/>
<path d="M754.5 447 Q756 443 760 442 Q765 441 767 445 L767.5 453.5 Q766 456 763 455.5" stroke-width="1.43" fill="#fff"/>
<ellipse cx="760.4" cy="449.4" rx="2.2" ry="2.8" transform="rotate(-25 760.4 449.4)" stroke-width="1.17"/>
<path d="M752.5 448 l5 -4 M753.5 450.5 l5 -4 M754.5 453 l5 -4" stroke-width="0.78"/>
<path d="M700.0 473.0 L720.0 483.5" stroke-width="1.30"/>
<path d="M725.9 510.0 L766.9 473.4" stroke-width="1.43"/>
<circle cx="716.3" cy="488.9" r="1.6" stroke-width="0.91"/>
<path d="M725.0 460.9 L758.5 479.3" stroke-width="0.78" stroke-dasharray="2.5 2"/>
<path d="M714.2 506.9 L790.0 467.6" stroke-width="0.78" stroke-dasharray="2.5 2"/>
<path d="M757.9 459.2 Q762 466 767.5 473.5 Q771 480 775.8 486.7 Q780 493 785.4 498.6 Q792 505.5 800.9 511.8" stroke-width="1.43"/>
<path d="M759.1 461 Q764 468 769 475.5 Q776 487 787 499.5 Q793 506 800 510.8" stroke-width="0.65"/>
<path d="M771.7 449.6 Q777 459 783 470 Q789 480 795 487.9 Q799 493 803.3 497.4 L810.5 503.4" stroke-width="1.43"/>
<path d="M800.9 511.8 L810.5 503.4 M802.5 513 L812 505" stroke-width="1.17"/>
<path d="M797.3 435.3 Q803 443 809.3 450.8 Q816 459 822.4 468.8 Q831 480 841.5 487.9" stroke-width="1.43"/>
<path d="M798.5 436.5 Q805 445 811 453 Q818 462 825 471 Q833 481 843.9 491.5" stroke-width="0.65"/>
<path d="M811.1 425.8 Q817 433 823.6 442.5 Q829 452 835.6 462.8 Q843 472 852.3 480.7" stroke-width="1.43"/>
<path d="M841.5 487.9 L852.3 480.7 M843.5 491 L856 484.5" stroke-width="1.17"/>
<path d="M787.2 431 Q787 423.5 791.8 423.3 L796.2 419 Q802 416.5 807.5 420.5 Q810.5 424.5 808.5 429 Q807 431.5 803.5 431.8 L797 437.5 Q796.7 438.8 794 439 Q787.5 438.5 787.2 431 Z" stroke-width="1.56" fill="#fff"/>
<ellipse cx="791.8" cy="432.4" rx="2.5" ry="3.3" transform="rotate(-15 791.8 432.4)" stroke-width="1.43"/>
<ellipse cx="802.2" cy="425.8" rx="2.8" ry="3.5" transform="rotate(-15 802.2 425.8)" stroke-width="1.43"/>
<path d="M792.5 423.8 l4.5 -3.6 M794 426 l4.5 -3.6 M795.3 428.3 l4.5 -3.6 M796.3 431 l4.5 -3.6 M796.8 434 l4.5 -3.6" stroke-width="0.78"/>
<path d="M796.2 419.2 Q797.5 425 796.8 437.5" stroke-width="1.17"/>
<circle cx="798.0" cy="440.0" r="1.8" stroke-width="1.30" fill="#444"/>
<path d="M772.3 450.8 L787.8 443.1 Q798 440.5 808.1 445.5 M774.6 454.4 L787.8 446.7 Q797 444 806.9 447.9" stroke-width="1.17"/>
<path d="M787.8 443.1 L787.8 438.9" stroke-width="1.04"/>
<path d="M787.8 468.8 L809.3 450.8" stroke-width="0.78"/>
<path d="M771.8 489.0 L772.3 520.0" stroke-width="0.91"/>
<path d="M789.6 392.0 L789.6 468.0" stroke-width="0.78" stroke-dasharray="3 2"/>
<path d="M804.3 430.0 L803.9 474.7" stroke-width="0.78" stroke-dasharray="3 2"/>
<path d="M822.4 443.5 L822.4 439.3 L832.5 435.6 L1000.0 528.3" stroke-width="1.30"/>
<path d="M834 442 L990 528" stroke-width="1.82" stroke-dasharray="0.9 0.8"/>
<path d="M822.4 443.5 L834.0 449.5 L975.0 527.2" stroke-width="0.91"/>
<path d="M840 456 L946 514.5" stroke-width="1.82" stroke-dasharray="0.9 0.8"/>
<path d="M827.2 441.5 L833.1 450.7" stroke-width="0.91"/>
<path d="M833.0 441.0 L833.1 450.7" stroke-width="0.78"/>
<path d="M843.9 471.0 L867.8 462.6 L869.6 466.2 L845.1 474.6" stroke-width="1.30"/>
<path d="M849.3 477.0 L869.6 469.8 L869.6 466.2" stroke-width="1.04"/>
<path d="M913.2 515.2 L938.3 502.1 L939.5 505.6 L914.4 518.8" stroke-width="1.30"/>
<path d="M915.6 521.0 L929.9 514.0 L929.9 528.0" stroke-width="1.04"/>
<path d="M880.9 499.7 L913.2 516.4" stroke-width="1.17"/>
<path d="M814.6 516.8 L861.0 485.5 L881.4 497.7 L828.2 527.0Z" stroke-width="1.30"/>
<path d="M828.2 527.0 L828.2 530.0 L881.4 500.5 L881.4 497.7" stroke-width="0.91"/>
<ellipse cx="835.0" cy="512.0" rx="6.5" ry="3.2" transform="rotate(-32 835.0 512.0)" stroke-width="1.17"/>
<ellipse cx="857.0" cy="497.5" rx="6.0" ry="3.0" transform="rotate(-32 857.0 497.5)" stroke-width="1.17"/>
<circle cx="845.0" cy="505.0" r="0.9" stroke-width="0.78"/>
<circle cx="826.0" cy="516.0" r="0.9" stroke-width="0.78"/>
<circle cx="869.0" cy="493.0" r="0.9" stroke-width="0.78"/>
<circle cx="850.0" cy="515.0" r="0.9" stroke-width="0.78"/>
<circle cx="838.0" cy="522.0" r="0.9" stroke-width="0.78"/>
<circle cx="860.0" cy="492.0" r="0.9" stroke-width="0.78"/>
<path d="M812.8 504.1 L826.4 517" stroke-width="0.78"/>
<path d="M774.9 556.1 L818.8 531.3 L839.9 550.4 L796.8 572.4Z" stroke-width="1.17"/>
<path d="M796.8 572.4 L796.8 576.2 L839.9 554.5 L839.9 550.4" stroke-width="1.17"/>
<path d="M774.9 556.1 L774.9 563.8" stroke-width="0.78"/>
<ellipse cx="808.5" cy="554.0" rx="6.5" ry="2.0" transform="rotate(-28 808.5 554.0)" stroke-width="1.17"/>
<ellipse cx="801.0" cy="546.5" rx="2.8" ry="2.0" transform="rotate(-10 801.0 546.5)" stroke-width="1.04"/>
<ellipse cx="809.5" cy="540.5" rx="2.2" ry="1.3" transform="rotate(0 809.5 540.5)" stroke-width="0.91"/>
<ellipse cx="828.0" cy="543.0" rx="2.2" ry="1.4" transform="rotate(0 828.0 543.0)" stroke-width="0.91"/>
<circle cx="782.0" cy="556.0" r="0.7" stroke-width="0.65"/>
<circle cx="791.0" cy="564.0" r="0.7" stroke-width="0.65"/>
<circle cx="806.0" cy="561.0" r="0.7" stroke-width="0.65"/>
<circle cx="830.0" cy="547.0" r="0.7" stroke-width="0.65"/>
<circle cx="817.0" cy="537.0" r="0.7" stroke-width="0.65"/>
<circle cx="821.0" cy="555.0" r="0.7" stroke-width="0.65"/>
<circle cx="797.0" cy="553.0" r="0.7" stroke-width="0.65"/>
<circle cx="799.0" cy="558.0" r="0.7" stroke-width="0.65"/>
<path d="M754.8 556.1 L803.5 525.5" stroke-width="1.43"/>
<path d="M765.3 557.1 L802.6 532.2 M764 555 L801.5 530" stroke-width="0.78" stroke-dasharray="1 0.7"/>
<path d="M754.8 556.1 L754.8 567.1" stroke-width="1.17"/>
<path d="M804.5 524.6 L804.5 536.0" stroke-width="0.91"/>
<path d="M809.3 520.7 L809.3 535.0" stroke-width="0.91"/>
<path d="M754.6 555.3 L855.6 610.0" stroke-width="0.91"/>
<path d="M770.0 585.0 L775.0 575.0" stroke-width="0.00"/>
<path d="M783 574.5 l1 5" stroke-width="1.82"/>
<path d="M830.5 563 L835 560.5 L836 554.5 Q838.5 552 841.5 554 L842 559.5 L848 561 Q851.5 561.5 851 565 L846 569 L842 572.5 L835.5 571.5 L830.5 569 Z" stroke-width="1.17" fill="#fff"/>
<path d="M836.5 556 l0.5 8 M839.5 555 l0.5 9 M843 562 l3 3 M833 565 l5 3" stroke-width="0.78"/>
<path d="M840.9 572.3 V577.6 L855.9 578.2 L861.8 574.4 V565.8" stroke-width="1.04"/>
<path d="M881.4 499.6 Q898 509 913.6 517.5 Q928 526 941.1 537.8" stroke-width="1.30"/>
<path d="M800.9 511.8 Q808 518 815 522.8 L826.7 530.5 Q834 539 840.6 550 Q850 559 861.6 565.5 L876.6 574.5" stroke-width="1.30"/>
<path d="M801.5 514 Q808 520 815 524.5 L826 532 Q833 540.5 839.8 551.5 Q849 560.5 860.8 567 L873 574.5" stroke-width="0.65"/>
<path d="M812.8 504.1 Q826 515 840.6 523.5 L867.8 544.5" stroke-width="1.17"/>
<path d="M869.4 545 L906.5 529.4 L931.6 541.4 M867 547.4 Q866 545.5 869.4 545" stroke-width="1.43"/>
<path d="M867 547.4 Q872 556 882.6 564.1" stroke-width="1.30"/>
<path d="M906.5 530.6 L906.5 545.0 L918.4 542.6" stroke-width="0.91"/>
<path d="M876.6 558.1 L918.4 542.6 L931.6 541.4" stroke-width="0.91"/>
<path d="M875.0 556.0 L906.5 545.0" stroke-width="0.65"/>
<path d="M889.7 524.7 L900.5 519.3 L903.5 525.8 L893.3 531.8 L883.8 528.2Z" stroke-width="1.17"/>
<path d="M889.7 524.7 L893.3 531.8" stroke-width="0.78"/>
<circle cx="895.2" cy="524.5" r="0.8" stroke-width="0.78"/>
<path d="M877.7 573.2 L967.8 524.8 L968.4 560.9 L878.2 611.2" stroke-width="1.43"/>
<path d="M877.7 573.2 L878.2 611.2 L854.9 624.1" stroke-width="1.30"/>
<path d="M854.9 624.1 L854.9 612.5 L856.5 611.5 L856.5 601.3 L877.7 589.0" stroke-width="1.17"/>
<path d="M862 605 v-6 M866.5 602 v-6" stroke-width="1.04"/>
<path d="M879.8 574.0 L879.8 610.5" stroke-width="0.78"/>
<path d="M893.4 566.5 L904.3 564.3 L904.3 578.8 L893.4 580.7 Z" stroke-width="1.30"/>
<circle cx="898.8" cy="572.4" r="0.9" stroke-width="0.91"/>
<path d="M950.7 533.2 L961.6 531.6 L961.6 546.8 L950.7 548.7 Z" stroke-width="1.30"/>
<circle cx="956.2" cy="540.0" r="0.9" stroke-width="0.91"/>
<ellipse cx="894.6" cy="594.1" rx="3.0" ry="3.8" transform="rotate(20 894.6 594.1)" stroke-width="1.30"/>
<ellipse cx="895.0" cy="594.8" rx="1.6" ry="2.2" transform="rotate(20 895.0 594.8)" stroke-width="0.91"/>
<ellipse cx="957.5" cy="558.9" rx="3.2" ry="3.8" transform="rotate(20 957.5 558.9)" stroke-width="1.30"/>
<ellipse cx="958.0" cy="559.5" rx="1.8" ry="2.3" transform="rotate(20 958.0 559.5)" stroke-width="0.91"/>
<path d="M948.0 540.0 L948.6 552.0 L955.0 557.0" stroke-width="0.78" stroke-dasharray="2 2"/>
<path d="M967.8 524.8 L988.2 526.1 L988.2 544.0 L968.4 555.5" stroke-width="1.17"/>
<path d="M988.2 526.1 L996.4 532.3 L996.4 544.6 L988.2 544.0" stroke-width="1.17"/>
<path d="M988.2 526.1 L992.0 521.0" stroke-width="1.04"/>
<path d="M996.4 532.3 L1000.0 530.0" stroke-width="1.04"/>
<path d="M902.3 573.2 L932.3 592.3" stroke-width="0.78"/>
<path d="M961.0 561.0 L973.2 568.4" stroke-width="0.78"/>
<path d="M955.5 584.1 L1020.0 545.9" stroke-width="0.78"/>
<circle cx="1158.5" cy="270.5" r="0.8" fill="#555" stroke="none"/>
<circle cx="1159.0" cy="208.0" r="0.5" fill="#555" stroke="none"/>
<circle cx="1165.0" cy="235.0" r="0.5" fill="#555" stroke="none"/>
<circle cx="1148.0" cy="490.0" r="0.5" fill="#555" stroke="none"/>
<circle cx="1160.0" cy="635.0" r="0.6" fill="#555" stroke="none"/>
<circle cx="1158.0" cy="672.0" r="0.7" fill="#555" stroke="none"/>
<circle cx="604.0" cy="358.0" r="0.4" fill="#555" stroke="none"/>
<circle cx="1007.0" cy="432.0" r="0.5" fill="#555" stroke="none"/>
<circle cx="855.0" cy="380.0" r="0.4" fill="#555" stroke="none"/>
<path d="M824.3 228.7L820.7 234.9" stroke-width="1.17"/>
<path d="M851.6 244.2L848.0 250.4" stroke-width="1.17"/>
<path d="M854.4 246.1L850.8 252.3" stroke-width="1.17"/>
<path d="M879.0 307.8L871.8 307.8" stroke-width="1.17"/>
<path d="M878.8 311.0L871.6 311.0" stroke-width="1.17"/>
<path d="M911.6 343.2L915.6 349.2" stroke-width="1.17"/>
<path d="M915.7 342.4L919.1 348.8" stroke-width="1.17"/>
<path d="M942.3 328.2L945.7 334.6" stroke-width="1.17"/>
<path d="M835.9 240.5L841.1 243.5" stroke-width="1.3" stroke-dasharray="1 0.6"/>
<path d="M858.8 254.4L862.2 256.6" stroke-width="1.3" stroke-dasharray="1 0.6"/>
<path d="M876.6 288.0L876.6 294.0" stroke-width="1.3" stroke-dasharray="1 0.6"/>
<path d="M874.6 323.0L874.6 329.0" stroke-width="1.3" stroke-dasharray="1 0.6"/>
<path d="M897.4 356.4L902.6 353.6" stroke-width="1.3" stroke-dasharray="1 0.6"/>
<path d="M927.9 341.1L934.1 337.9" stroke-width="1.3" stroke-dasharray="1 0.6"/>
</g>
<g font-family="Liberation Sans, sans-serif" font-size="10.6px" fill="#000" letter-spacing="0.7">
<text transform="matrix(1.22 0 0 1 812.8 181.1)">34</text>
<text transform="matrix(1.22 0 0 1 854.3 204.7)">35</text>
<text transform="matrix(1.22 0 0 1 971.3 274.4)">34</text>
<text transform="matrix(1.22 0 0 1 824.1 306.5)">04</text>
<text transform="matrix(1.22 0 0 1 823.1 326.5)">03</text>
<text transform="matrix(1.22 0 0 1 840.6 344.0)">22</text>
<text transform="matrix(1.22 0 0 1 841.1 363.6)">23</text>
<text transform="matrix(1.22 0 0 1 840.8 384.0)">20</text>
<text transform="matrix(1.22 0 0 1 841.1 404.7)">2I</text>
<text transform="matrix(1.22 0 0 1 713.8 320.7)">29</text>
<text transform="matrix(1.22 0 0 1 690.6 332.7)">28</text>
<text transform="matrix(1.22 0 0 1 669.3 344.0)">27</text>
<text transform="matrix(1.22 0 0 1 666.8 392.0)">26</text>
<text transform="matrix(1.22 0 0 1 646.3 404.0)">30</text>
<text transform="matrix(1.22 0 0 1 625.8 413.5)">32</text>
<text transform="matrix(1.22 0 0 1 606.1 424.7)">3I</text>
<text transform="matrix(1.22 0 0 1 730.6 429.5)">36</text>
<text transform="matrix(1.22 0 0 1 632.1 474.5)">38</text>
<text transform="matrix(1.22 0 0 1 892.2 386.5)">I5</text>
<text transform="matrix(1.22 0 0 1 912.8 398.7)">I6</text>
<text transform="matrix(1.22 0 0 1 933.4 410.9)">I4</text>
<text transform="matrix(1.22 0 0 1 953.5 423.1)">I8</text>
<text transform="matrix(1.22 0 0 1 974.7 434.9)">I7</text>
<text transform="matrix(1.22 0 0 1 994.8 483.5)">00</text>
<text transform="matrix(1.22 0 0 1 645.4 551.8)">03</text>
<text transform="matrix(1.22 0 0 1 644.9 574.3)">02</text>
<text transform="matrix(1.22 0 0 1 693.2 617.2)">39</text>
<text transform="matrix(1.22 0 0 1 718.8 630.5)">I2</text>
<text transform="matrix(1.22 0 0 1 742.7 644.4)">II</text>
<text transform="matrix(1.22 0 0 1 763.8 657.5)">I0</text>
<text transform="matrix(1.22 0 0 1 691.3 719.8)">4I</text>
<text transform="matrix(1.22 0 0 1 807.8 764.7)">44</text>
<text transform="matrix(1.22 0 0 1 784.5 776.4)">43</text>
<text transform="matrix(1.22 0 0 1 762.8 788.5)">42</text>
<text transform="matrix(1.22 0 0 1 939.3 716.9)">07</text>
<text transform="matrix(1.22 0 0 1 996.4 691.3)">I0</text>
<text transform="matrix(1.22 0 0 1 1023.1 708.6)">09</text>
</g></svg>
<!--/DRAWING-->
</body></html>
